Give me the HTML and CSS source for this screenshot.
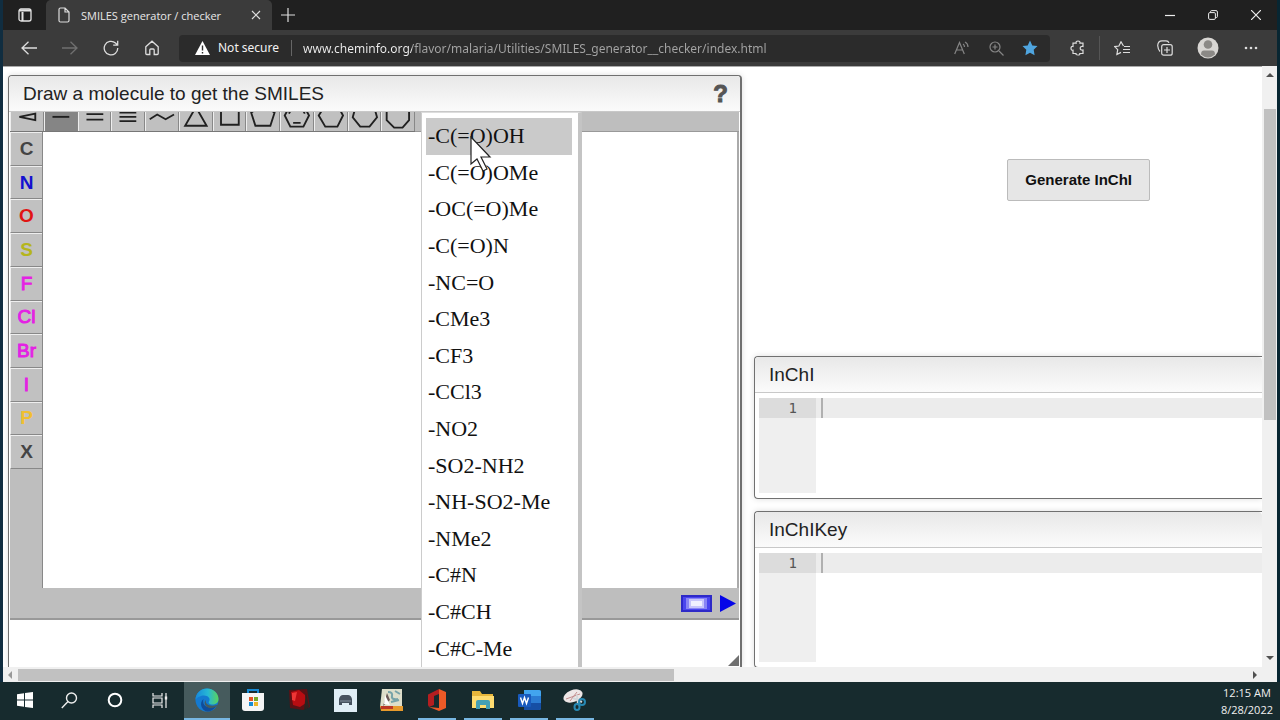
FILE: index.html
```html
<!DOCTYPE html>
<html lang="en">
<head>
<meta charset="utf-8">
<title>SMILES generator / checker</title>
<link rel="stylesheet" href="styles.css">
</head>
<body>
<div class="browser">
  <header class="tabstrip">
    <button class="icon-btn tab-actions" aria-label="Tab actions"><svg width="14" height="14" viewBox="0 0 14 14"><rect x="1" y="1" width="12" height="12" rx="2" fill="none" stroke="#e4e4e4" stroke-width="1.3"/><path d="M1 2.5h12M4.5 4v9" stroke="#e4e4e4" stroke-width="2"/></svg></button>
    <div class="tab">
      <svg width="12" height="16" viewBox="0 0 12 16" fill="none" stroke="#ddd" stroke-width="1.2"><path d="M1 2.5q0-1.5 1.500-1.500H7L11 5V13.500q0 1.500-1.500 1.500h-7Q1 15 1 13.500zM7 1v4h4"/></svg>
      <span class="tab-title">SMILES generator / checker</span>
      <button class="icon-btn tab-close" aria-label="Close tab"><svg width="10" height="10" viewBox="0 0 10 10"><path d="M1 1l8 8M9 1L1 9" stroke="#ddd" stroke-width="1.2"/></svg></button>
    </div>
    <button class="icon-btn new-tab" aria-label="New tab"><svg width="14" height="14" viewBox="0 0 14 14"><path d="M7 0v14M0 7h14" stroke="#ddd" stroke-width="1.2"/></svg></button>
    <div class="window-controls">
      <button class="icon-btn" aria-label="Minimize"><svg width="10" height="10" viewBox="0 0 10 10"><path d="M0 5.500h10" stroke="#eee" stroke-width="1.2"/></svg></button>
      <button class="icon-btn" aria-label="Restore"><svg width="10" height="10" viewBox="0 0 10 10" fill="none" stroke="#eee"><rect x=".6" y="2.600" width="6.800" height="6.800" rx="1.2"/><path d="M2.600 2.500V1.500Q2.600.6 3.600.6H8q1.400 0 1.400 1.400v4.500q0 1-1 1H7.500"/></svg></button>
      <button class="icon-btn" aria-label="Close"><svg width="10" height="10" viewBox="0 0 10 10"><path d="M0 0l10 10M10 0L0 10" stroke="#eee" stroke-width="1.2"/></svg></button>
    </div>
  </header>

  <nav class="navbar">
    <div class="nav-buttons">
      <button class="icon-btn" aria-label="Back"><svg width="16" height="14" viewBox="0 0 16 14" fill="none" stroke="#ddd" stroke-width="1.3"><path d="M16 7H1M7.500.7L1 7l6.500 6.300"/></svg></button>
      <button class="icon-btn" aria-label="Forward"><svg width="16" height="14" viewBox="0 0 16 14" fill="none" stroke="#707070" stroke-width="1.3"><path d="M0 7h15M8.500.7L15 7l-6.500 6.300"/></svg></button>
      <button class="icon-btn" aria-label="Refresh"><svg width="16" height="16" viewBox="0 0 16 16" fill="none" stroke="#ddd" stroke-width="1.3"><path d="M14.800 8A6.800 6.800 0 1 1 12.500 3l2 2M14.700 .8V5.200H10.200"/></svg></button>
      <button class="icon-btn" aria-label="Home"><svg width="14" height="16" viewBox="0 0 14 16" fill="none" stroke="#ddd" stroke-width="1.3"><path d="M.8 6.800L7 1.200l6.200 5.600v6.700q0 1-1 1H9.200V10q0-1-1-1H5.800q-1 0-1 1v4.500H1.800q-1 0-1-1z"/></svg></button>
    </div>
    <div class="address">
      <svg width="15" height="14" viewBox="0 0 15 14"><path d="M7.500 0L15 14H0z" fill="#fff"/><path d="M7.500 4.500v5M7.500 11v1.500" stroke="#2b2b2b" stroke-width="1.4"/></svg>
      <label class="security" for="url">Not secure</label>
      <input class="url" id="url" type="text" value="www.cheminfo.org/flavor/malaria/Utilities/SMILES_generator__checker/index.html">
      <button class="icon-btn" aria-label="Read aloud"><svg width="16" height="14" viewBox="0 0 16 14" fill="none" stroke="#858585" stroke-width="1.2"><path d="M.7 13L5.500 1.500 10.300 13M2.500 9h6M9 3q1.500 1 1.500 3M11 1q3 1.500 3 5"/></svg></button>
      <button class="icon-btn" aria-label="Zoom"><svg width="15" height="15" viewBox="0 0 15 15" fill="none" stroke="#858585" stroke-width="1.2"><circle cx="6" cy="6" r="5"/><path d="M10 10l4.500 4.500M6 3.500v5M3.500 6h5"/></svg></button>
      <button class="icon-btn" aria-label="Favorite"><svg width="16" height="16" viewBox="0 0 16 16"><path d="M8 .5l2.300 4.900 5.200.7-3.800 3.700.9 5.400L8 12.700l-4.600 2.500.9-5.400L.5 6.100l5.200-.7z" fill="#4fa5df"/></svg></button>
    </div>
    <div class="nav-tools">
      <button class="icon-btn" aria-label="Extensions"><svg width="16" height="16" viewBox="0 0 16 16" fill="none" stroke="#ddd" stroke-width="1.2"><path d="M3 3.200h3.200Q5.500 1 8 1t1.900 2.200H13V6.500q-2.800-.4-2.800 1.700T13 10v3.500H9.800Q10.300 15 8 15T6 13.500H3V10.200Q1 10.500 1 8.300T3 6.500z"/></svg></button>
      <button class="icon-btn favorites" aria-label="Favorites"><svg width="16" height="15" viewBox="0 0 16 15" fill="none" stroke="#ddd" stroke-width="1.2"><path d="M9.500 5L7 .8 4.900 5 .7 5.600l3 3-.8 4.900L7 11.400M10 5.500h6M9 8.500h7M9 11.500h7"/></svg></button>
      <button class="icon-btn" aria-label="Collections"><svg width="16" height="16" viewBox="0 0 16 16" fill="none" stroke="#ddd" stroke-width="1.2"><rect x="4.700" y="4.700" width="10.500" height="10.500" rx="2"/><path d="M10 7v6M7 10h6M3 11.500Q1 9.500.7 5.500 1 1 5 .9h4q2.300 0 3 2"/></svg></button>
      <button class="icon-btn" aria-label="Profile"><svg width="22" height="22" viewBox="0 0 22 22"><circle cx="11" cy="11" r="10.500" fill="#d8d6d3"/><circle cx="11" cy="7.500" r="4.300" fill="#8b8986"/><path d="M4 17.500q0-4 3-4h8q3 0 3 4-7 6-14 0z" fill="#8b8986"/></svg></button>
      <button class="icon-btn" aria-label="Settings and more"><svg width="14" height="4" viewBox="0 0 14 4" fill="#ddd"><circle cx="2" cy="2" r="1.300"/><circle cx="7" cy="2" r="1.300"/><circle cx="12" cy="2" r="1.300"/></svg></button>
    </div>
  </nav>

  <div class="page-frame">
    <main class="viewport">
      <section class="panel drawing">
        <header class="panel-head"><h1>Draw a molecule to get the SMILES</h1><button class="help" aria-label="Help">?</button></header>
        <div class="editor">
          <div class="bonds">
            <div class="bond-tools">
              <button aria-label="Stereo bond"><svg viewBox="0 0 34 20"><path d="M9 4.500L26 1v7z"/></svg></button>
              <button class="selected" aria-label="Single bond"><svg viewBox="0 0 34 20"><path d="M8 4.500h18"/></svg></button>
              <button aria-label="Double bond"><svg viewBox="0 0 34 20"><path d="M8 1.500h18M8 7.500h18"/></svg></button>
              <button aria-label="Triple bond"><svg viewBox="0 0 34 20"><path d="M8 0h18M8 4.500h18M8 9h18"/></svg></button>
              <button aria-label="Chain"><svg viewBox="0 0 34 20"><path d="M4 7l8-5 9 5 9-5"/></svg></button>
              <button aria-label="Cyclopropane"><svg viewBox="0 0 34 20"><path d="M17-6L5.500 14h23z"/></svg></button>
              <button aria-label="Cyclobutane"><svg viewBox="0 0 34 20"><path d="M7.500-6h19v19h-19z"/></svg></button>
              <button aria-label="Cyclopentane"><svg viewBox="0 0 34 20"><path d="M17-9L4.500 0 9 14h16l4.500-14z"/></svg></button>
              <button aria-label="Benzene"><svg viewBox="0 0 34 20"><path d="M10-8h14l6 11-6 12H10L4 3zM13 11h8M8.500 1l4-7M25.500 1l-4-7"/></svg></button>
              <button aria-label="Cyclohexane"><svg viewBox="0 0 34 20"><path d="M11-8h13l6 11-6 12H11L4 3z"/></svg></button>
              <button aria-label="Cycloheptane"><svg viewBox="0 0 34 20"><path d="M17-11L7-6 4 5l8 10h10l8-10-3-11z"/></svg></button>
              <button aria-label="Cyclooctane"><svg viewBox="0 0 34 20"><path d="M12-10L5-3V8l8 8h9l7-8V-3l-7-7z"/></svg></button>
            </div>
          </div>
          <div class="workspace">
            <div class="elements">
              <div class="element-tools">
                <button class="c">C</button><button class="n">N</button><button class="o">O</button><button class="s">S</button><button class="hal">F</button><button class="hal">Cl</button><button class="hal">Br</button><button class="hal">I</button><button class="p">P</button><button class="c">X</button>
              </div>
            </div>
            <div class="canvas"></div>
          </div>
          <div class="editor-foot">
            <svg width="31" height="17" viewBox="0 0 31 17"><rect width="31" height="17" fill="#2d29c8"/><rect x="2" y="2" width="27" height="13" fill="#4a45ee"/><rect x="5" y="3" width="21" height="11" fill="#8985f5"/><rect x="8" y="4" width="15" height="9" fill="#c7c5fb"/><rect x="10" y="6" width="11" height="5" fill="#f0f0ff"/></svg>
            <svg width="16" height="17" viewBox="0 0 16 17"><path d="M0 0l16 8.500L0 17z" fill="#0505e8"/></svg>
          </div>
          <ul class="group-menu">
            <li><button class="current">-C(=O)OH</button></li><li><button>-C(=O)OMe</button></li><li><button>-OC(=O)Me</button></li><li><button>-C(=O)N</button></li><li><button>-NC=O</button></li><li><button>-CMe3</button></li><li><button>-CF3</button></li><li><button>-CCl3</button></li><li><button>-NO2</button></li><li><button>-SO2-NH2</button></li><li><button>-NH-SO2-Me</button></li><li><button>-NMe2</button></li><li><button>-C#N</button></li><li><button>-C#CH</button></li><li><button>-C#C-Me</button></li>
          </ul>
          <svg class="pointer" width="22" height="38" viewBox="0 0 22 38"><path d="M1 1v27l6-5 6 12 4-2-6-12h9z" fill="#fff" stroke="#222" stroke-width="1.2"/></svg>
        </div>
        <div class="panel-rest"><svg width="11" height="11" viewBox="0 0 11 11"><path d="M11 0v11H0z" fill="#707070"/></svg></div>
      </section>
      <div class="results">
        <div class="actions"><button class="generate">Generate InChI</button></div>
        <section class="panel output">
          <header class="panel-head"><h2>InChI</h2></header>
          <div class="code"><div class="gutter"><span>1</span></div><textarea aria-label="InChI" rows="1"></textarea></div>
        </section>
        <section class="panel output">
          <header class="panel-head"><h2>InChIKey</h2></header>
          <div class="code"><div class="gutter"><span>1</span></div><textarea aria-label="InChIKey" rows="1"></textarea></div>
        </section>
      </div>
    </main>
    <div class="vscroll"><i class="up"></i><div class="thumb"></div><i class="down"></i></div>
  </div>
  <div class="hscroll"><i class="left"></i><div class="thumb"></div><i class="right"></i></div>
</div>

<footer class="taskbar">
  <div class="system">
    <button aria-label="Start"><svg width="16" height="16" viewBox="0 0 16 16" fill="#fff"><path d="M0 2.200L7 1.200V7.500H0zM8 1L16 0v7.500H8zM0 8.500h7v6.300l-7-1zM8 8.500h8V16l-8-1z"/></svg></button>
    <button aria-label="Search"><svg width="17" height="17" viewBox="0 0 17 17" fill="none" stroke="#eee" stroke-width="1.4"><circle cx="10.500" cy="6" r="5"/><path d="M7 9.500L.8 16"/></svg></button>
    <button aria-label="Cortana"><svg width="16" height="16" viewBox="0 0 16 16"><circle cx="8" cy="8" r="6.300" fill="none" stroke="#fff" stroke-width="2"/></svg></button>
    <button aria-label="Task view"><svg width="16" height="15" viewBox="0 0 16 15" fill="none" stroke="#eee" stroke-width="1.2"><path d="M1 0v3h9V0M1 15v-3h9v3M1 5h9v5H1zM14 0v15"/><path d="M12.800 5h2.400" stroke-width="3"/></svg></button>
  </div>
  <div class="apps">
    <button class="active" aria-label="Microsoft Edge"><svg width="24" height="24" viewBox="0 0 24 24"><defs><linearGradient id="edge" x1="0" x2="1"><stop offset="0" stop-color="#1688db"/><stop offset=".55" stop-color="#27b9d4"/><stop offset="1" stop-color="#5bd35b"/></linearGradient></defs><circle cx="12" cy="12" r="11.500" fill="#147ad0"/><path d="M.5 12C.5 5 6 .5 12 .5S23.500 5 23.500 11c0 4-3 5.500-6 5.500-3 0-4.500-1.500-3.500-3 2-3-1-6-5-6S1 10 .5 12z" fill="url(#edge)"/><path d="M8.500 11c-2 6 4 11 13 7-3 4-6 5.500-9 5.500C6 23 4 14 8.500 11z" fill="#0f4d9b"/><path d="M11 12c-1.500 4 4 7 10.500 5l1.500 1q-7 3-10 1.500c-4-2-4-6-2-7.500z" fill="#465b5d"/></svg></button>
    <button aria-label="Microsoft Store"><svg width="22" height="24" viewBox="0 0 22 24"><path d="M6 6V2h10v4" fill="none" stroke="#1689d3" stroke-width="2"/><path d="M0 5h22v15q0 3-3 3H3q-3 0-3-3z" fill="#f5f5f5"/><path d="M7 9h4v4H7z" fill="#e45324"/><path d="M12 9h4v4h-4z" fill="#74a92a"/><path d="M7 14h4v4H7z" fill="#168bd3"/><path d="M12 14h4v4h-4z" fill="#edb526"/></svg></button>
    <button aria-label="Card game"><svg width="22" height="22" viewBox="0 0 22 22"><path d="M1 1l18-1 3 18-7 3-13-2z" fill="#5b1115"/><path d="M3 3l8-2 6 5 1 8-6 4-7-2z" fill="#b80d12"/><path d="M4 4l5-1-2 9-3-1z" fill="#ef3636"/><path d="M18 4l3 14-5 3z" fill="#292522"/></svg></button>
    <button aria-label="Scanner"><svg width="23" height="23" viewBox="0 0 23 23"><path d="M0 0h23v23H0z" fill="#e0eef6"/><path d="M5 10q1-4 4-4h5q3 0 4 4v6h-3v-2H8v2H5z" fill="#46525f"/><path d="M6 12h11" stroke="#8491a0"/></svg></button>
    <button aria-label="Sketch editor"><svg width="23" height="23" viewBox="0 0 23 23"><path d="M2 0h20v18H0z" fill="#dddeca"/><path d="M8 3q5 0 4 4t6 3M11 13l8-2M15 2l5 3" fill="none" stroke="#77a3a8" stroke-width="2"/><path d="M3 17L7 4l3 7z" fill="#6c5b58"/><path d="M5 6l5 10-6-1z" fill="#fff"/><path d="M0 17h23v5H1z" fill="#e79a2c"/><path d="M1 17h12v3H1z" fill="#bd3726"/></svg></button>
    <button class="running" aria-label="Office"><svg width="20" height="22" viewBox="0 0 20 22"><path d="M1 5.500L12 0v5L7 7v9l-5 2-1-2z" fill="#b51e20"/><path d="M12 0l7 3v16l-7 3-10-4 10 1z" fill="#ed5a27"/></svg></button>
    <button class="running" aria-label="File Explorer"><svg width="22" height="20" viewBox="0 0 22 20"><path d="M0 1h8l2 3h11v14H0z" fill="#e7b63b"/><path d="M0 6h22v12H0z" fill="#ffdc70"/><path d="M4 19v-7q0-2 2-2h10q2 0 2 2v7h-4v-4H8v4z" fill="#45a0b6"/></svg></button>
    <button class="running" aria-label="Word"><svg width="23" height="20" viewBox="0 0 23 20"><path d="M6 0h15q2 0 2 2v16q0 2-2 2H6z" fill="#2b7cd3"/><path d="M6 0h15q2 0 2 2v4H6z" fill="#42a5ee"/><path d="M6 13h17v5q0 2-2 2H6z" fill="#164fa5"/><rect y="4" width="13" height="13" rx="1" fill="#185abd"/><path d="M2.500 7.500l2 6 2-6 2 6 2-6" fill="none" stroke="#fff" stroke-width="1.4"/></svg></button>
    <button class="running" aria-label="Snipping Tool"><svg width="24" height="22" viewBox="0 0 24 22"><ellipse cx="10" cy="7" rx="10" ry="6" transform="rotate(-22 10 7)" fill="#eee7e7"/><path d="M3 10l14-5M7 12l7-9" stroke="#c28d8d"/><path d="M10 9l9 4M14 6l1 10" stroke="#d3d7da" stroke-width="2"/><g fill="none" stroke="#2788b3" stroke-width="2"><circle cx="19" cy="13" r="3"/><ellipse cx="14" cy="18" rx="2.500" ry="3"/></g></svg></button>
  </div>
  <div class="clock"><span>12:15 AM</span><span>8/28/2022</span></div>
</footer>
</body>
</html>
```
FILE: styles.css
```css
* { box-sizing: border-box; }
body {
  margin: 0;
  height: 100vh;
  display: flex;
  flex-direction: column;
  overflow: hidden;
  background: #172b2e;
  font-family: "Noto Sans", "Open Sans", sans-serif;
}
button { font: inherit; padding: 0; border: 0; background: none; color: inherit; }
svg { display: block; flex: none; }
h1, h2 { margin: 0; font-weight: 400; }

.browser {
  flex: 1;
  min-height: 0;
  display: flex;
  flex-direction: column;
  border-left: 3px solid #102d40;
  border-right: 3px solid #082632;
}
.icon-btn { display: flex; align-items: center; justify-content: center; }

.tabstrip { flex: none; height: 30px; display: flex; background: #202020; color: #e8e8e8; }
.tab-actions { width: 43px; }
.tab {
  width: 226px;
  display: flex;
  align-items: center;
  padding: 0 11px 0 12px;
  gap: 11px;
  background: #3b3b3b;
  border-radius: 5px 5px 0 0;
}
.tab-title { flex: 1; font-family: "Open Sans", sans-serif; font-size: 11px; white-space: nowrap; }
.new-tab { width: 32px; }
.window-controls { margin-left: auto; display: flex; }
.window-controls .icon-btn { width: 43px; }

.navbar { flex: none; height: 36px; display: flex; align-items: center; background: #3b3b3b; }
.nav-buttons { display: flex; padding: 0 7px 0 5px; }
.nav-buttons .icon-btn { width: 41px; height: 30px; }
.address {
  flex: 1;
  min-width: 0;
  height: 27px;
  display: flex;
  align-items: center;
  padding: 0 3px 0 16px;
  background: #2b2b2b;
  border-radius: 4px;
}
.security {
  padding: 0 12px 0 8px;
  border-right: 1px solid #666;
  color: #f2f2f2;
  font-size: 12px;
  line-height: 16px;
  white-space: nowrap;
}
.url {
  flex: 1;
  min-width: 0;
  border: 0;
  padding: 0;
  margin-left: 11px;
  outline: 0;
  color: transparent;
  background: linear-gradient(90deg, #f0f0f0 109px, #a5a5a5 109px);
  -webkit-background-clip: text;
  background-clip: text;
  font: 12px "Noto Sans", sans-serif;
}
.address .icon-btn { width: 34px; }
.nav-tools { display: flex; align-items: center; padding: 0 5px 0 7px; }
.nav-tools .icon-btn { width: 43px; height: 24px; }
.nav-tools .icon-btn:first-child { border-right: 1px solid #555; }

.page-frame { flex: 1; min-height: 0; display: flex; background: #fff; }
.viewport {
  flex: 1;
  min-width: 0;
  display: grid;
  grid-template-columns: minmax(0, 734fr) minmax(0, 508fr);
  grid-template-rows: minmax(0, 1fr);
  gap: 12px;
  padding: 8px 0 0 5px;
  overflow: hidden;
  border-top: 1px solid #aaa;
  background: #fff;
  font-family: "Liberation Sans", Arial, sans-serif;
}
.panel {
  display: flex;
  flex-direction: column;
  background: #fff;
  border: 1px solid #707070;
  border-radius: 4px;
  box-shadow: 0 0 6px #ddd;
}
.panel-head {
  flex: none;
  height: 36px;
  display: flex;
  align-items: center;
  justify-content: space-between;
  padding: 0 14px;
  border-bottom: 1px solid #c8c8c8;
  border-radius: 4px 4px 0 0;
  background: linear-gradient(#e8e8e8, #fbfbfb);
  color: #222;
}
.panel-head h1, .panel-head h2 { font-size: 19px; line-height: 24px; white-space: nowrap; }
.help { color: #555; font-size: 24px; font-weight: 700; line-height: 28px; -webkit-text-stroke: 1px #555; }
.drawing { border-width: 1px 2px 0 1px; border-radius: 4px 4px 0 0; }
.drawing .panel-head { padding-right: 12px; }
.editor {
  position: relative;
  flex: none;
  display: flex;
  flex-direction: column;
  padding: 0 1px;
}
.bonds { height: 20px; background: #bebebe; border-bottom: 1px solid #999; }
.bond-tools { width: 405px; height: 20px; display: flex; border-bottom: 1px solid #777; }
.bond-tools button {
  flex: 1;
  overflow: hidden;
  background: #c0c0c0;
  border-left: 1px solid #eee;
  border-right: 1px solid #888;
}
.bond-tools .selected { background: #858585; }
.bond-tools svg { width: 100%; height: 20px; fill: none; stroke: #202020; stroke-width: 2; }
.workspace { height: 456px; display: flex; }
.elements { flex: none; width: 33px; background: #bebebe; border-right: 1px solid #888; }
.element-tools { height: 337px; display: flex; flex-direction: column; }
.element-tools button {
  flex: 1;
  border-top: 1px solid #eee;
  border-left: 1px solid #eee;
  border-bottom: 1px solid #888;
  background: #c1c1c1;
  font-size: 19px;
  font-weight: 700;
  line-height: 24px;
}
.c { color: #444; }
.n { color: #1410d0; }
.o { color: #e01414; }
.s { color: #b5b51c; }
.element-tools .hal { color: #e422e4; font-weight: 400; -webkit-text-stroke: 1px #e422e4; }
.p { color: #efbf30; }
.canvas { flex: 1; background: #fff; border-right: 2px solid #aaa; }
.editor-foot {
  height: 32px;
  display: flex;
  align-items: center;
  justify-content: flex-end;
  gap: 8px;
  padding-right: 3px;
  background: #bebebe;
  border-bottom: 2px solid #999;
}
.panel-rest { flex: 1; display: flex; align-items: flex-end; justify-content: flex-end; padding: 1px; }
.group-menu {
  position: absolute;
  left: 412px;
  top: 0;
  width: 161px;
  height: 561px;
  margin: 0;
  padding: 5px 6px 6px 4px;
  list-style: none;
  display: grid;
  grid-auto-rows: 1fr;
  background: #fff;
  border-left: 1px solid #ccc;
  border-right: 4px solid #c4c4c4;
  border-top: 1px solid #ddd;
  color: #111;
  font-family: "Liberation Serif", "Times New Roman", serif;
}
.group-menu button { width: 100%; height: 100%; padding: 0 2px; text-align: left; font-size: 22px; line-height: 26px; }
.group-menu .current { background: #cacaca; }
.pointer { position: absolute; left: 461px; top: 24px; }

.results { display: flex; flex-direction: column; min-width: 0; }
.actions { flex: none; height: 281px; padding: 84px 112px; display: flex; align-items: flex-start; justify-content: flex-end; }
.generate {
  padding: 10px 17px;
  border: 1px solid #bbb;
  border-radius: 2px;
  background: #e6e6e6;
  color: #111;
  font-size: 15px;
  font-weight: 700;
  line-height: 20px;
  white-space: nowrap;
}
.output { flex: none; height: 143px; margin-bottom: 12px; border-right: 0; border-radius: 4px 0 0 4px; }
.output:last-child { height: 157px; margin-bottom: 0; }
.code { flex: 1; display: flex; align-items: stretch; padding: 5px 0 5px 4px; }
.gutter { width: 57px; background: #efefef; }
.gutter span {
  display: block;
  padding-right: 19px;
  background: #dcdcdc;
  color: #555;
  font: 14px/20px "DejaVu Sans Mono", monospace;
  text-align: right;
}
.code textarea {
  flex: 1;
  min-width: 0;
  height: 20px;
  padding: 0 0 0 4px;
  border: 0;
  outline: 0;
  resize: none;
  overflow: hidden;
  background: linear-gradient(90deg, #ececec 5px, #b0b0b0 5px, #b0b0b0 7px, #ececec 7px);
  font: 14px/20px "DejaVu Sans Mono", monospace;
}

.vscroll { flex: none; width: 15px; display: flex; flex-direction: column; align-items: center; padding: 7px 2px; background: #f0f0f0; }
.vscroll .thumb { width: 12px; height: 53%; margin-top: 32px; background: #c1c1c1; }
.up, .down, .left, .right { width: 0; height: 0; border: 4px solid transparent; }
.up { border-top: 0; border-bottom-color: #505050; }
.down { border-bottom: 0; border-top-color: #505050; margin-top: auto; }
.hscroll { flex: none; height: 15px; display: flex; align-items: center; padding: 0 20px 0 5px; background: #f0f0f0; }
.hscroll .thumb { width: 52.5%; height: 12px; margin-left: 6px; background: #c1c1c1; }
.left { border-left: 0; border-right-color: #999; }
.right { border-right: 0; border-left-color: #505050; margin-left: auto; }

.taskbar { flex: none; height: 38px; display: flex; padding-left: 2px; background: #172b2e; color: #f0f0f0; }
.system, .apps { display: flex; }
.apps { margin-left: 2px; }
.taskbar button { display: flex; align-items: center; justify-content: center; width: 46px; border-bottom: 2px solid transparent; }
.taskbar .system button { width: 45px; }
.taskbar .active { background: #465b5d; border-bottom-color: #78b7e2; }
.taskbar .running { background: linear-gradient(#78b7e2, #78b7e2) center bottom / 38px 2px no-repeat border-box; }
.clock {
  margin-left: auto;
  padding: 2px 7px 0 0;
  display: flex;
  flex-direction: column;
  align-items: center;
  font-family: "Open Sans", sans-serif;
  font-size: 11px;
  line-height: 17px;
}
```
